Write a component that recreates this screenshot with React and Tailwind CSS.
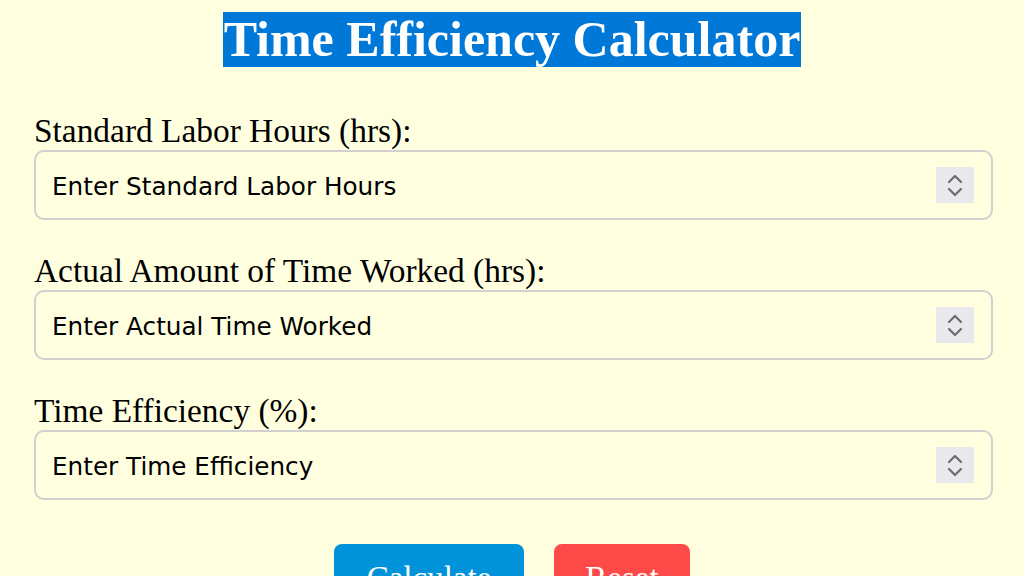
import { useState } from "react";

const fields = [
  { id: "standard", label: "Standard Labor Hours (hrs):", placeholder: "Enter Standard Labor Hours" },
  { id: "actual", label: "Actual Amount of Time Worked (hrs):", placeholder: "Enter Actual Time Worked" },
  { id: "efficiency", label: "Time Efficiency (%):", placeholder: "Enter Time Efficiency" },
];

function Spinner() {
  return (
    <div className="w-[38px] h-[36px] bg-[#e9e9ed] flex flex-col items-center justify-center gap-[3px] shrink-0">
      <svg width="18" height="11" viewBox="0 0 18 11" fill="none">
        <path d="M3 9 L9 3 L15 9" stroke="#6b6b70" strokeWidth="2.2" strokeLinecap="round" strokeLinejoin="round" />
      </svg>
      <svg width="18" height="11" viewBox="0 0 18 11" fill="none">
        <path d="M3 2 L9 8 L15 2" stroke="#6b6b70" strokeWidth="2.2" strokeLinecap="round" strokeLinejoin="round" />
      </svg>
    </div>
  );
}

export default function App() {
  const [values, setValues] = useState({ standard: "", actual: "", efficiency: "" });

  const set = (id, v) => setValues((s) => ({ ...s, [id]: v }));
  const reset = () => setValues({ standard: "", actual: "", efficiency: "" });

  return (
    <div className="min-h-screen bg-[#ffffe0] pl-[34px] pr-[31px] pt-[12px] pb-10 font-['Liberation_Serif',serif]">
      <div className="flex justify-center pr-[3px]">
        <h1 className="bg-[#0078d7] text-white font-bold text-[50px] leading-[55px] px-[1px]">
          Time Efficiency Calculator
        </h1>
      </div>

      <div className="mt-[46px] flex flex-col gap-[33px]">
        {fields.map((f) => (
          <div key={f.id}>
            <label htmlFor={f.id} className="block text-[33.4px] leading-[36px] text-black">
              {f.label}
            </label>
            <div className="mt-[1px] h-[70px] border-2 border-[#d0d0d0] rounded-[10px] flex items-center pl-[16px] pr-[17px]">
              <input
                id={f.id}
                type="text"
                value={values[f.id]}
                onChange={(e) => set(f.id, e.target.value)}
                placeholder={f.placeholder}
                className="flex-1 bg-transparent outline-none pt-[3px] text-[24.7px] text-black placeholder:text-black font-['DejaVu_Sans',sans-serif]"
              />
              <Spinner />
            </div>
          </div>
        ))}
      </div>

      <div className="mt-[44px] flex justify-center gap-[30px] pr-[3px]">
        <button className="w-[190px] h-[70px] bg-[#0093d9] text-white text-[33px] rounded-[8px]">Calculate</button>
        <button onClick={reset} className="w-[136px] h-[70px] bg-[#ff4a4a] text-white text-[33px] rounded-[8px]">
          Reset
        </button>
      </div>
    </div>
  );
}
